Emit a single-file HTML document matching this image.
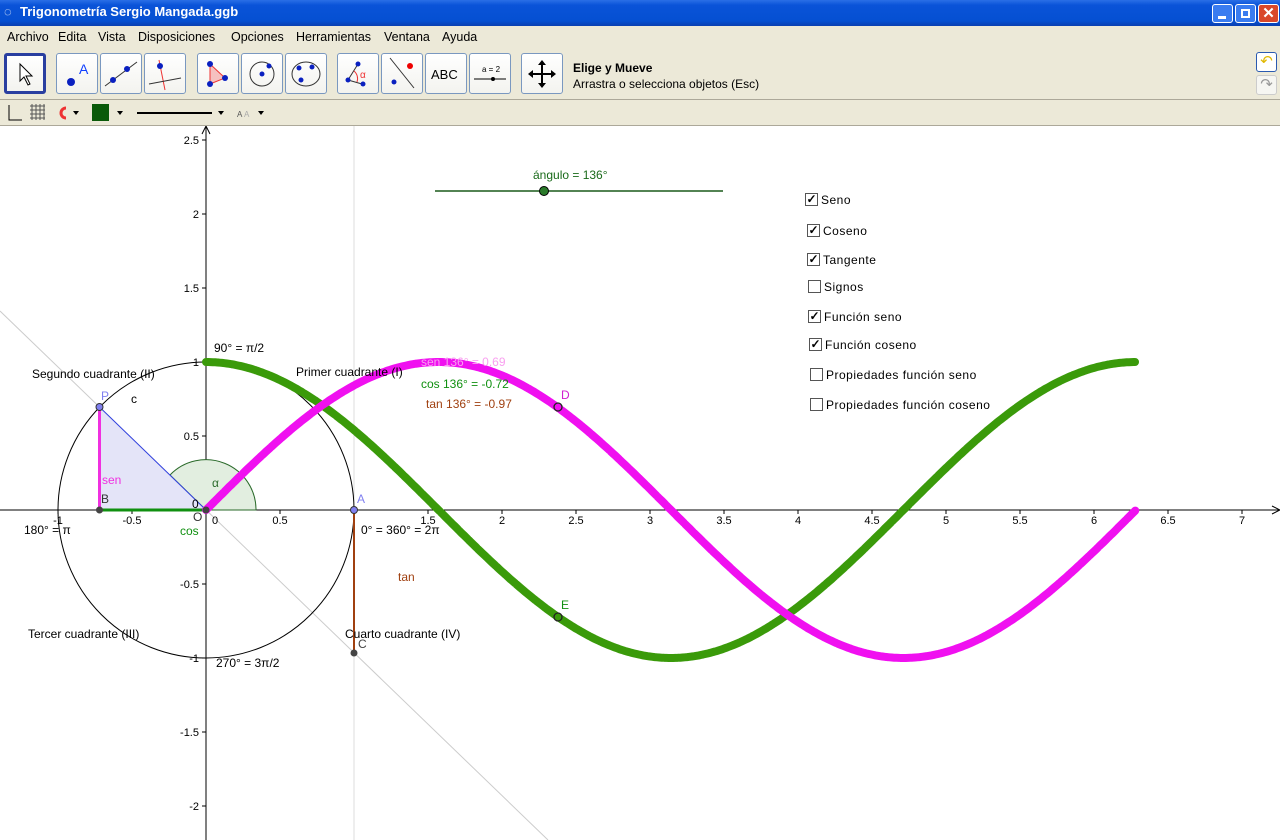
<!DOCTYPE html>
<html><head><meta charset="utf-8"><style>
*{margin:0;padding:0;box-sizing:border-box}
body{width:1280px;height:840px;overflow:hidden;background:#fff;font-family:"Liberation Sans",sans-serif;font-size:12px;position:relative}
#title{position:absolute;left:0;top:0;width:1280px;height:26px;background:linear-gradient(#2a6fe6,#0a53d8 20%,#0550d2 80%,#0a3fb0);color:#fff;font-weight:bold;font-size:13px;line-height:24px;padding-left:20px}
#menu{position:absolute;top:26px;left:0;width:1280px;height:22px;background:#ece9d8;font-size:12.5px;line-height:22px}
#menu span{position:absolute;top:0}
#tool{position:absolute;top:48px;left:0;width:1280px;height:52px;background:#ece9d8;border-bottom:1px solid #aca899}
.b{position:absolute;top:5px;width:42px;height:41px;border:1px solid #7a98c0;border-radius:3px;background:linear-gradient(#fff,#f3f3ef)}
.b svg{position:absolute;left:0;top:0}
#style{position:absolute;top:100px;left:0;width:1280px;height:26px;background:#ece9d8;border-bottom:1px solid #aca899}
.t{position:absolute;white-space:nowrap}
.cl{letter-spacing:0.5px}
.cb{position:absolute;width:13px;height:13px;border:1px solid #555;background:#fff;font-size:12px;line-height:11px;text-align:center;font-weight:bold}
.wb{position:absolute;top:4px;width:21px;height:19px;border-radius:3px}
</style></head><body>
<div id="title"><span style="position:absolute;left:4px;top:0;font-weight:normal">◌</span>Trigonometría Sergio Mangada.ggb
<div class="wb" style="left:1212px;background:#3a7cf0;border:1px solid #fff"><div style="position:absolute;left:5px;top:11px;width:8px;height:3px;background:#fff"></div></div>
<div class="wb" style="left:1235px;background:#3a7cf0;border:1px solid #fff"><div style="position:absolute;left:5px;top:4px;width:9px;height:9px;border:2px solid #fff"></div></div>
<div class="wb" style="left:1258px;background:#d9482a;border:1px solid #fff;font-size:15px;line-height:17px;text-align:center">✕</div>
</div>
<div id="menu"><span style="left:7px">Archivo</span><span style="left:58px">Edita</span><span style="left:98px">Vista</span><span style="left:138px">Disposiciones</span><span style="left:231px">Opciones</span><span style="left:296px">Herramientas</span><span style="left:384px">Ventana</span><span style="left:442px">Ayuda</span></div>
<div id="tool">
<div class="b" style="left:4px;border:3px solid #2a3fa0"><svg width="36" height="35"><path d="M13 8 L13 25 L17 21 L21 29 L23 28 L19 20 L25 20 Z" fill="#fff" stroke="#000"/></svg></div>
<div class="b" style="left:56px"><svg width="40" height="40"><circle cx="14" cy="28" r="4" fill="#0a20c0"/><text x="22" y="20" fill="#1040ff" font-size="14" font-family="Liberation Sans">A</text></svg></div>
<div class="b" style="left:100px"><svg width="40" height="40"><line x1="4" y1="32" x2="36" y2="8" stroke="#333"/><circle cx="12" cy="26" r="3" fill="#0a20c0"/><circle cx="26" cy="15" r="3" fill="#0a20c0"/></svg></div>
<div class="b" style="left:144px"><svg width="40" height="40"><line x1="14" y1="6" x2="20" y2="36" stroke="#e33"/><line x1="4" y1="30" x2="36" y2="24" stroke="#333"/><circle cx="15" cy="12" r="3" fill="#0a20c0"/></svg></div>
<div class="b" style="left:197px"><svg width="40" height="40"><polygon points="12,10 27,24 12,30" fill="#f5c0c0" stroke="#e33"/><circle cx="12" cy="10" r="3" fill="#0a20c0"/><circle cx="27" cy="24" r="3" fill="#0a20c0"/><circle cx="12" cy="30" r="3" fill="#0a20c0"/></svg></div>
<div class="b" style="left:241px"><svg width="40" height="40"><circle cx="20" cy="20" r="12" fill="none" stroke="#333"/><circle cx="20" cy="20" r="2.5" fill="#0a20c0"/><circle cx="27" cy="12" r="2.5" fill="#0a20c0"/></svg></div>
<div class="b" style="left:285px"><svg width="40" height="40"><ellipse cx="20" cy="20" rx="14" ry="12" fill="none" stroke="#333"/><circle cx="13" cy="14" r="2.5" fill="#0a20c0"/><circle cx="26" cy="13" r="2.5" fill="#0a20c0"/><circle cx="15" cy="26" r="2.5" fill="#0a20c0"/></svg></div>
<div class="b" style="left:337px"><svg width="40" height="40"><path d="M10 26 L20 10 M10 26 L24 30" stroke="#333" fill="none"/><path d="M16 17 A10 10 0 0 1 19 28" stroke="#e33" fill="none"/><text x="22" y="24" fill="#e33" font-size="10">α</text><circle cx="10" cy="26" r="2.5" fill="#0a20c0"/><circle cx="20" cy="10" r="2.5" fill="#0a20c0"/><circle cx="25" cy="30" r="2.5" fill="#0a20c0"/></svg></div>
<div class="b" style="left:381px"><svg width="40" height="40"><line x1="8" y1="4" x2="32" y2="34" stroke="#333"/><circle cx="28" cy="12" r="3" fill="#e00"/><circle cx="12" cy="28" r="2.5" fill="#0a20c0"/></svg></div>
<div class="b" style="left:425px"><svg width="40" height="40"><text x="5" y="25" font-size="13" font-family="Liberation Sans">ABC</text></svg></div>
<div class="b" style="left:469px"><svg width="40" height="40"><text x="12" y="18" font-size="8" font-family="Liberation Sans">a = 2</text><line x1="4" y1="25" x2="36" y2="25" stroke="#000"/><circle cx="23" cy="25" r="2" fill="#000"/></svg></div>
<div class="b" style="left:521px"><svg width="40" height="40"><path d="M20 8 V32 M8 20 H32" stroke="#000" stroke-width="2"/><path d="M20 6 l-4 5 h8 Z M20 34 l-4 -5 h8 Z M6 20 l5 -4 v8 Z M34 20 l-5 -4 v8 Z" fill="#000"/></svg></div>
<div class="t" style="left:573px;top:13px;font-weight:bold">Elige y Mueve</div>
<div class="t" style="left:573px;top:29px">Arrastra o selecciona objetos (Esc)</div>
<div style="position:absolute;left:1256px;top:4px;width:21px;height:20px;border:1px solid #2a5ab0;border-radius:3px;background:#fff;color:#e0b800;font-size:15px;text-align:center;line-height:18px">↶</div>
<div style="position:absolute;left:1256px;top:27px;width:21px;height:20px;border:1px solid #ccc;border-radius:3px;background:#f6f6f2;color:#999;font-size:15px;text-align:center;line-height:18px">↷</div>
</div>
<div id="style">
<svg width="300" height="26" style="position:absolute;left:0;top:0">
<path d="M9 5 V20 H22" stroke="#000" fill="none"/>
<path d="M30 6 H45 M30 10 H45 M30 14 H45 M30 18 H45 M32 4 V20 M36 4 V20 M40 4 V20 M44 4 V20" stroke="#555"/>
<path d="M66 8 A5 5 0 1 0 66 18" stroke="#e33" stroke-width="3" fill="none"/>
<path d="M73 11 h6 l-3 4z M117 11 h6 l-3 4z M218 11 h6 l-3 4z M258 11 h6 l-3 4z" fill="#000"/>
<rect x="92" y="4" width="17" height="17" fill="#0a5a0a"/>
<line x1="137" y1="13" x2="212" y2="13" stroke="#000" stroke-width="2"/>
<text x="237" y="17" font-size="8" fill="#555">A</text><text x="244" y="17" font-size="8" fill="#aaa">A</text>
</svg></div>

<svg width="1280" height="714" style="position:absolute;left:0;top:126px" viewBox="0 126 1280 714" font-family="Liberation Sans" font-size="11">
<line x1="354" y1="126" x2="354" y2="840" stroke="#ddd"/>
<line x1="0" y1="311" x2="548" y2="840" stroke="#ccc"/>
<line x1="0" y1="510" x2="1280" y2="510" stroke="#000"/>
<path d="M1272 506 L1280 510 L1272 514" fill="none" stroke="#000"/>
<line x1="206" y1="126" x2="206" y2="840" stroke="#000"/>
<path d="M202 134 L206 126 L210 134" fill="none" stroke="#000"/>
<g id="ticks" stroke="#000"></g>
<g id="lbl"></g>
<path d="M206 510 L256 510 A50 50 0 0 0 170 475 Z" fill="#e2eee0" stroke="#2a6a2a"/>
<polygon points="206,510 99.5,407 99.5,510" fill="#e4e4f8" stroke="none"/>
<line x1="99.5" y1="407" x2="206" y2="510" stroke="#3040e0"/>
<circle cx="206" cy="510" r="148" fill="none" stroke="#000"/>
<line x1="99.5" y1="407" x2="99.5" y2="510" stroke="#f030e0" stroke-width="3"/>
<line x1="99.5" y1="510" x2="206" y2="510" stroke="#109010" stroke-width="3"/>
<line x1="354" y1="510" x2="354" y2="653" stroke="#a04010" stroke-width="2"/>
<path id="cosc" fill="none" stroke="#3a9a0a" stroke-width="8" stroke-linecap="round" stroke-dasharray="12 1"/>
<path id="sinc" fill="none" stroke="#f010f0" stroke-width="8" stroke-linecap="round" stroke-dasharray="12 1"/>
<circle cx="99.5" cy="407" r="3.5" fill="#8080f0" stroke="#333"/>
<circle cx="99.5" cy="510" r="3.5" fill="#444"/>
<circle cx="206" cy="510" r="3.5" fill="#444"/>
<circle cx="354" cy="510" r="3.5" fill="#8080f0" stroke="#333"/>
<circle cx="354" cy="653" r="3.5" fill="#444"/>
<circle cx="558" cy="407" r="4" fill="none" stroke="#222" stroke-width="1.3"/>
<circle cx="558" cy="617" r="4" fill="none" stroke="#222" stroke-width="1.3"/>
<g font-size="12">
<text x="214" y="352">90° = π/2</text>
<text x="32" y="378">Segundo cuadrante (II)</text>
<text x="296" y="376">Primer cuadrante (I)</text>
<text x="131" y="403">c</text>
<text x="101" y="400" fill="#8080f0">P</text>
<text x="102" y="484" fill="#f030e0">sen</text>
<text x="101" y="503" fill="#333">B</text>
<text x="192" y="508">0</text>
<text x="193" y="521" fill="#333">O</text>
<text x="212" y="487" fill="#2a6a2a">α</text>
<text x="357" y="503" fill="#8080f0">A</text>
<text x="24" y="534">180° = π</text>
<text x="180" y="535" fill="#109010">cos</text>
<text x="361" y="534">0° = 360° = 2π</text>
<text x="398" y="581" fill="#a04010">tan</text>
<text x="28" y="638">Tercer cuadrante (III)</text>
<text x="345" y="638">Cuarto cuadrante (IV)</text>
<text x="358" y="648" fill="#444">C</text>
<text x="216" y="667">270° = 3π/2</text>
<text x="421" y="366" fill="#f9a0f0">sen 136° = 0.69</text>
<text x="421" y="388" fill="#109010">cos 136° = -0.72</text>
<text x="426" y="408" fill="#a04010">tan 136° = -0.97</text>
<text x="561" y="399" fill="#d020d0">D</text>
<text x="561" y="609" fill="#109010">E</text>
<text x="533" y="179" fill="#1a6a1a">ángulo = 136°</text>
</g>
<line x1="435" y1="191" x2="723" y2="191" stroke="#1a5a1a" stroke-width="1.5"/>
<circle cx="544" cy="191" r="4.5" fill="#2a7a2a" stroke="#000"/>
</svg>
<div id="cbs"></div>
<script>
var O=206,Y=510,S=148,ns="http://www.w3.org/2000/svg";
function curve(f){var d="";for(var i=0;i<=400;i++){var t=2*Math.PI*i/400;d+=(i?"L":"M")+(O+t*S).toFixed(1)+" "+(Y-f(t)*S).toFixed(1);}return d;}
document.getElementById("cosc").setAttribute("d",curve(Math.cos));
document.getElementById("sinc").setAttribute("d",curve(Math.sin));
var tk=document.getElementById("ticks"),lb=document.getElementById("lbl");
function mk(tag,a,p,txt){var e=document.createElementNS(ns,tag);for(var k in a)e.setAttribute(k,a[k]);if(txt)e.textContent=txt;p.appendChild(e);}
for(var v=-1;v<=7;v+=0.5){if(v==0)continue;var x=O+v*S;mk("line",{x1:x,y1:510,x2:x,y2:514},tk);if(v!=1)mk("text",{x:x,y:524,"text-anchor":"middle"},lb,String(v));}
mk("text",{x:212,y:524},lb,"0");
for(var v=-2;v<=2.5;v+=0.5){if(v==0)continue;var y=Y-v*S;mk("line",{x1:202,y1:y,x2:206,y2:y},tk);mk("text",{x:199,y:y+4,"text-anchor":"end"},lb,String(v));}
var cb=[["Seno",805,200,1],["Coseno",807,231,1],["Tangente",807,260,1],["Signos",808,287,0],["Función seno",808,317,1],["Función coseno",809,345,1],["Propiedades función seno",810,375,0],["Propiedades función coseno",810,405,0]];
var h="";cb.forEach(function(c){h+='<div class="cb" style="left:'+c[1]+'px;top:'+(c[2]-7)+'px">'+(c[3]?'✓':'')+'</div><div class="t cl" style="left:'+(c[1]+16)+'px;top:'+(c[2]-7)+'px">'+c[0]+'</div>';});
document.getElementById("cbs").innerHTML=h;
</script>
</body></html>
